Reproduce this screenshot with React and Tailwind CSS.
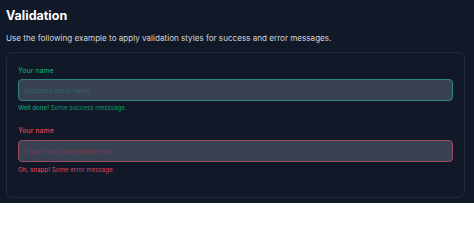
import React from "react";

export default function App() {
  return (
    <div
      className="h-[203px] w-full overflow-hidden bg-[#111827] pl-[6px] pr-[9px] pt-[6px]"
      style={{ fontFamily: "Inter, 'Noto Sans', sans-serif" }}
    >
      <h2 className="text-[12.5px] font-bold leading-[20px] text-white">Validation</h2>
      <p className="mt-[6px] text-[8.1px] leading-[12px] text-[#d1d5db]">
        Use the following example to apply validation styles for success and error messages.
      </p>
      <div className="mt-[8px] rounded-[6px] border border-[#222a39] bg-[#111827] px-[11px] pt-[13px] pb-[22px]">
        <div>
          <label className="block text-[7px] font-medium leading-[10px] text-[#0e9f6e]">Your name</label>
          <input
            type="text"
            placeholder="Success input value"
            className="mt-[3px] block h-[22px] w-full rounded-[4px] border border-[#2c8577] bg-[#374151] px-[5px] text-[7px] text-[#31c48d] placeholder-[#2b6b66] outline-none"
          />
          <p className="mt-[2px] text-[6.2px] leading-[10px] text-[#0e9f6e]">
            <span className="font-medium">Well done!</span> Some success messsage.
          </p>
        </div>
        <div className="mt-[13px]">
          <label className="block text-[7px] font-medium leading-[10px] text-[#dc4457]">Your name</label>
          <input
            type="text"
            placeholder="Error input placeholder text"
            className="mt-[4px] block h-[22px] w-full rounded-[4px] border border-[#9e4a62] bg-[#374151] px-[5px] text-[7px] text-[#f05252] placeholder-[#7d3a52] outline-none"
          />
          <p className="mt-[3px] text-[6.2px] leading-[10px] text-[#dc4457]">
            <span className="font-medium">Oh, snapp!</span> Some error message.
          </p>
        </div>
      </div>
    </div>
  );
}
